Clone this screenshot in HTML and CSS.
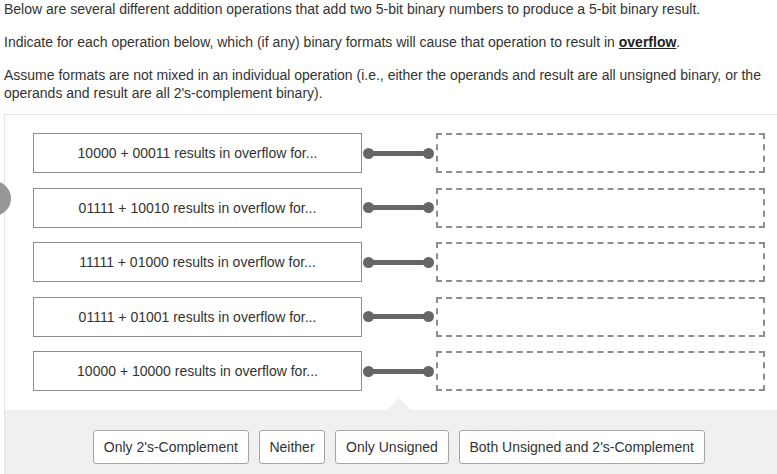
FILE: index.html
```html
<!DOCTYPE html>
<html>
<head>
<meta charset="utf-8">
<link rel="stylesheet" href="styles.css">
</head>
<body>
<div class="handle"></div>
<p>Below are several different addition operations that add two 5-bit binary numbers to produce a 5-bit binary result.</p>
<p>Indicate for each operation below, which (if any) binary formats will cause that operation to result in <b class="kw">overflow</b>.</p>
<p class="last">Assume formats are not mixed in an individual operation (i.e., either the operands and result are all unsigned binary, or the operands and result are all 2's-complement binary).</p>
<div class="panel">
  <div class="rows">
    <div class="row"><div class="src">10000 + 00011 results in overflow for...</div><div class="link"><span class="dot"></span><span class="bar"></span><span class="dot"></span></div><div class="dst"></div></div>
    <div class="row"><div class="src">01111 + 10010 results in overflow for...</div><div class="link"><span class="dot"></span><span class="bar"></span><span class="dot"></span></div><div class="dst"></div></div>
    <div class="row"><div class="src">11111 + 01000 results in overflow for...</div><div class="link"><span class="dot"></span><span class="bar"></span><span class="dot"></span></div><div class="dst"></div></div>
    <div class="row"><div class="src">01111 + 01001 results in overflow for...</div><div class="link"><span class="dot"></span><span class="bar"></span><span class="dot"></span></div><div class="dst"></div></div>
    <div class="row"><div class="src">10000 + 10000 results in overflow for...</div><div class="link"><span class="dot"></span><span class="bar"></span><span class="dot"></span></div><div class="dst"></div></div>
  </div>
  <div class="bank">
    <div class="notch"></div>
    <button class="opt">Only 2's-Complement</button>
    <button class="opt">Neither</button>
    <button class="opt">Only Unsigned</button>
    <button class="opt">Both Unsigned and 2's-Complement</button>
  </div>
</div>
</body>
</html>
```
FILE: styles.css
```css
html, body {
  margin: 0;
  overflow: hidden;
}
body {
  padding: 0 0 0 4px;
  font-family: "Liberation Sans", Arial, sans-serif;
  font-size: 14px;
  color: #333;
  width: 773px;
  height: 474px;
  position: relative;
}
p {
  margin: 0 0 15px;
  line-height: 18px;
}
p.last {
  margin-bottom: 12px;
}
.kw {
  text-decoration: underline;
  font-weight: bold;
  color: #222;
}
.handle {
  position: absolute;
  left: -24px;
  top: 181px;
  width: 35px;
  height: 35px;
  border-radius: 50%;
  background: #979797;
  z-index: 2;
}
.panel {
  border-top: 1px solid #e4e4e4;
  border-left: 1px solid #e4e4e4;
  background: #fff;
}
.rows {
  padding: 18px 0 19px 28px;
  display: flex;
  flex-direction: column;
  gap: 14.5px;
}
.row {
  display: flex;
  align-items: center;
  height: 40px;
}
.src {
  box-sizing: border-box;
  width: 329px;
  height: 40px;
  border: 1px solid #8c8c8c;
  display: flex;
  align-items: center;
  justify-content: center;
  font-size: 14px;
  color: #333;
}
.link {
  width: 74px;
  display: flex;
  align-items: center;
  padding: 0 2px 0 1px;
  box-sizing: border-box;
}
.dot {
  width: 11px;
  height: 11px;
  border-radius: 50%;
  background: #666;
  flex: none;
}
.bar {
  flex: 1;
  height: 5px;
  background: #666;
  margin: 0 -2px;
}
.dst {
  box-sizing: border-box;
  width: 329px;
  height: 40px;
  border: 2px dashed #8e8e8e;
}
.bank {
  position: relative;
  background: #f0f0f0;
  height: 80px;
  padding: 20px 0 0 88px;
  box-sizing: border-box;
  display: flex;
  align-items: flex-start;
  gap: 10px;
}
.notch {
  position: absolute;
  top: -12px;
  left: 382px;
  width: 0;
  height: 0;
  border-left: 12px solid transparent;
  border-right: 12px solid transparent;
  border-bottom: 12px solid #f0f0f0;
}
.opt {
  font-family: "Liberation Sans", Arial, sans-serif;
  font-size: 14px;
  color: #333;
  background: #fff;
  border: 1px solid #a6a6a6;
  border-radius: 3px;
  height: 34px;
  padding: 0 9.75px;
  margin: 0;
}
```
